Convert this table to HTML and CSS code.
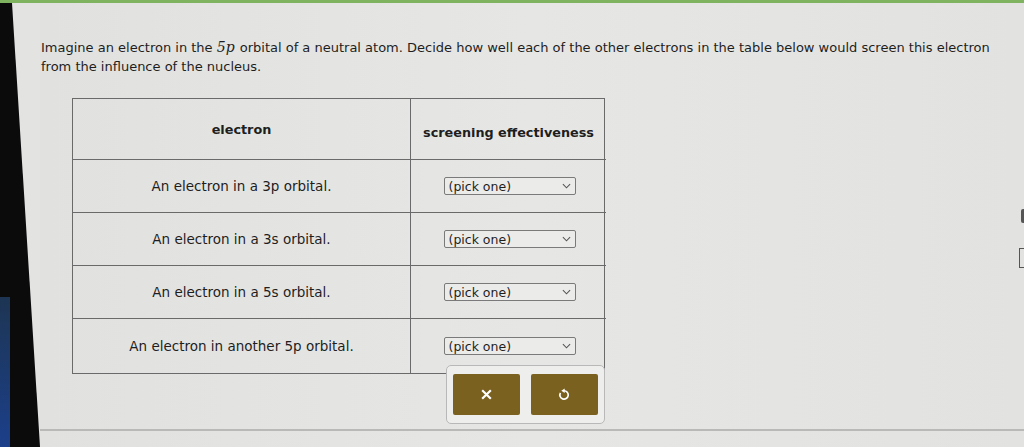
FILE: index.html
```html
<!DOCTYPE html>
<html>
<head>
<meta charset="utf-8">
<link rel="stylesheet" href="styles.css">
</head>
<body>
<div class="topbar"></div>
<div class="screen">
  <div class="bezel"><div class="blue"></div></div>
  <div class="page">
    <p class="prompt">Imagine an electron in the <span class="math">5p</span> orbital of a neutral atom. Decide how well each of the other electrons in the table below would screen this electron from the influence of the nucleus.</p>
    <div class="tablewrap">
      <div class="grid">
        <div class="cell head">electron</div>
        <div class="cell head low">screening effectiveness</div>
        <div class="cell">An electron in a 3p orbital.</div>
        <div class="cell"><div class="select">(pick one)<svg viewBox="0 0 10 6" class="chev"><path d="M1 1 L5 5 L9 1" fill="none" stroke="#555" stroke-width="1.2"/></svg></div></div>
        <div class="cell">An electron in a 3s orbital.</div>
        <div class="cell"><div class="select">(pick one)<svg viewBox="0 0 10 6" class="chev"><path d="M1 1 L5 5 L9 1" fill="none" stroke="#555" stroke-width="1.2"/></svg></div></div>
        <div class="cell">An electron in a 5s orbital.</div>
        <div class="cell"><div class="select">(pick one)<svg viewBox="0 0 10 6" class="chev"><path d="M1 1 L5 5 L9 1" fill="none" stroke="#555" stroke-width="1.2"/></svg></div></div>
        <div class="cell">An electron in another 5p orbital.</div>
        <div class="cell"><div class="select">(pick one)<svg viewBox="0 0 10 6" class="chev"><path d="M1 1 L5 5 L9 1" fill="none" stroke="#555" stroke-width="1.2"/></svg></div></div>
      </div>
      <div class="actions">
        <div class="panel">
          <button class="btn"><svg viewBox="0 0 12 12" class="ico"><path d="M2 2 L10 10 M10 2 L2 10" stroke="#fff" stroke-width="2" fill="none"/></svg></button>
          <button class="btn"><svg viewBox="0 0 14 14" class="ico"><path d="M6.5 3 A4.5 4.5 0 1 1 2.6 5.3" stroke="#fff" stroke-width="1.8" fill="none"/><path d="M3.6 3 L7.2 0.6 L7.2 5.4 Z" fill="#fff"/></svg></button>
        </div>
      </div>
    </div>
    <div class="edge"></div>
    <div class="sidemark one"></div>
    <div class="sidemark two"></div>
  </div>
</div>
</body>
</html>
```
FILE: styles.css
```css
html, body {
  margin: 0;
  padding: 0;
  width: 1024px;
  height: 447px;
  overflow: hidden;
  background: #e3e4e2;
  font-family: "DejaVu Sans", Verdana, sans-serif;
  color: #1e1e1e;
}
.topbar {
  height: 3px;
  background: #7fb35f;
}
.screen {
  display: flex;
  height: 444px;
}
.bezel {
  width: 40px;
  background: #0b0b0c;
  clip-path: polygon(0 0, 12px 0, 40px 100%, 0 100%);
  display: flex;
  flex-direction: column;
  justify-content: flex-end;
}
.blue {
  width: 10px;
  height: 150px;
  background: linear-gradient(#1d3553, #1c3f8a);
}
.page {
  flex: 1;
  background: linear-gradient(90deg, #e1e2e0 0%, #e6e7e5 50%, #e2e3e1 100%);
  position: relative;
}
.prompt {
  margin: 35px 0 0 1px;
  width: 965px;
  font-size: 13px;
  line-height: 19px;
}
.math {
  display: inline-block;
  font-family: "DejaVu Serif", "Liberation Serif", serif;
  font-style: italic;
  font-size: 14px;
  line-height: 1;
  padding-right: 1px;
}
.tablewrap {
  margin: 22px 0 0 32px;
  width: 533px;
}
.grid {
  display: grid;
  grid-template-columns: 338px 195px;
  grid-template-rows: 61px 53px 53px 53px 54px;
  border: 1px solid #6a6a6a;
}
.cell {
  display: flex;
  align-items: center;
  justify-content: center;
  font-size: 13.5px;
  border-bottom: 1px solid #6a6a6a;
}
.cell:nth-child(odd) {
  border-right: 1px solid #6a6a6a;
}
.cell:nth-last-child(-n+2) {
  border-bottom: none;
}
.head {
  font-weight: bold;
  font-size: 12.8px;
}
.head.low {
  padding-top: 6px;
}
.select {
  width: 122px;
  height: 16px;
  border: 1px solid #7a7a7a;
  border-radius: 2px;
  background: #ebecea;
  display: flex;
  align-items: center;
  justify-content: space-between;
  padding: 0 4px;
  font-size: 12.5px;
  margin-left: 2px;
}
.chev {
  width: 9px;
  height: 6px;
}
.actions {
  display: flex;
  justify-content: flex-end;
}
.panel {
  margin-top: -9px;
  width: 145px;
  height: 57px;
  border: 1px solid #b8b8b8;
  border-radius: 5px;
  background: #eeefed;
  display: flex;
  align-items: center;
  justify-content: space-between;
  padding: 0 6px;
}
.btn {
  width: 67px;
  height: 41px;
  border: none;
  border-radius: 2px;
  background: #7a611f;
  display: flex;
  align-items: center;
  justify-content: center;
  padding: 0;
}
.ico {
  width: 13px;
  height: 13px;
}
.edge {
  position: absolute;
  left: 0;
  right: 0;
  top: 426px;
  height: 2px;
  background: #b9bab8;
}
.sidemark {
  position: absolute;
  right: 0;
}
.sidemark.one {
  top: 206px;
  width: 3px;
  height: 14px;
  background: #555;
  border-radius: 2px 0 0 2px;
}
.sidemark.two {
  top: 245px;
  width: 4px;
  height: 18px;
  border: 1px solid #555;
  border-right: none;
}
```
